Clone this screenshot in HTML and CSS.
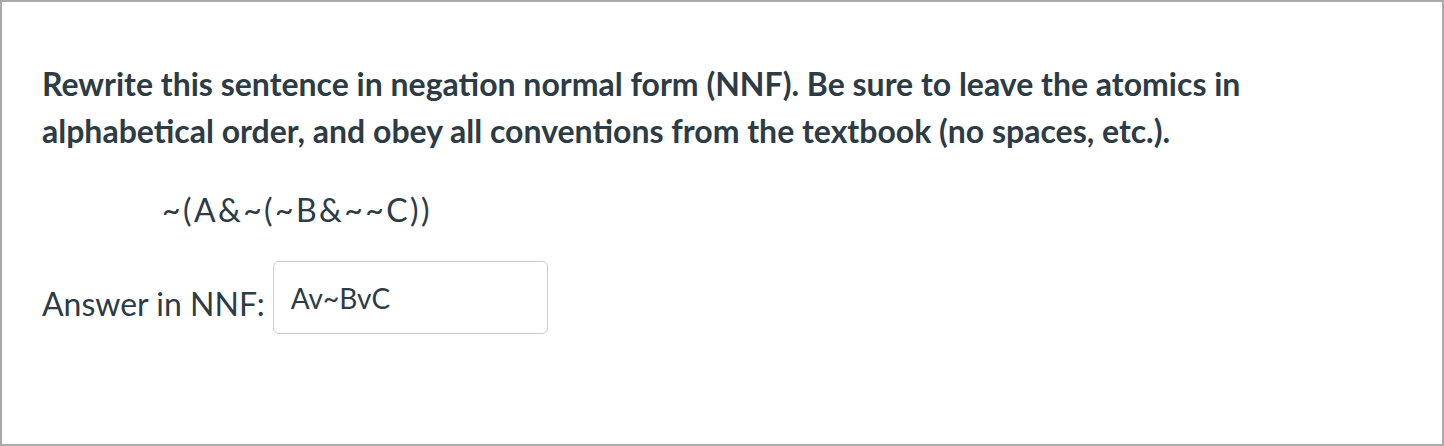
FILE: index.html
```html
<!DOCTYPE html>
<html lang="en">
<head>
<meta charset="utf-8">
<title>Question</title>
<link rel="stylesheet" href="styles.css">
</head>
<body>
<div class="question">
  <p class="prompt">Rewrite this sentence in negation normal form (NNF). Be sure to leave the atomics in alphabetical order, and obey all conventions from the textbook (no spaces, etc.).</p>
  <p class="formula">~(A&amp;~(~B&amp;~~C))</p>
  <div class="answer-row">
    <label class="answer-label" for="ans">Answer in NNF:</label>
    <input class="answer-input" id="ans" type="text" value="Av~BvC">
  </div>
</div>
</body>
</html>
```

FILE: styles.css
```css
html, body {
  margin: 0;
  padding: 0;
  background: #ffffff;
}

.question {
  box-sizing: border-box;
  width: 1444px;
  height: 446px;
  border: 2px solid #aaaaaa;
  padding: 58px 40px 0 40px;
  font-family: Lato, "Noto Sans", sans-serif;
  color: #2d3b45;
  font-size: 32px;
  line-height: 47px;
}

.prompt {
  margin: 0;
  font-weight: 700;
  max-width: 1300px;
}

.formula {
  margin: 32px 0 0 0;
  padding-left: 120px;
  font-weight: 400;
  letter-spacing: 2.4px;
}

.answer-row {
  display: flex;
  align-items: flex-start;
  gap: 8px;
  margin-top: 28px;
}

.answer-label {
  margin-top: 19px;
  white-space: nowrap;
}

.answer-input {
  box-sizing: border-box;
  width: 275px;
  height: 73px;
  border: 1px solid #c7cdd1;
  border-radius: 6px;
  padding: 0 17px;
  font-family: Lato, "Noto Sans", sans-serif;
  font-size: 28px;
  color: #2d3b45;
  background: #ffffff;
  outline: none;
}
```
